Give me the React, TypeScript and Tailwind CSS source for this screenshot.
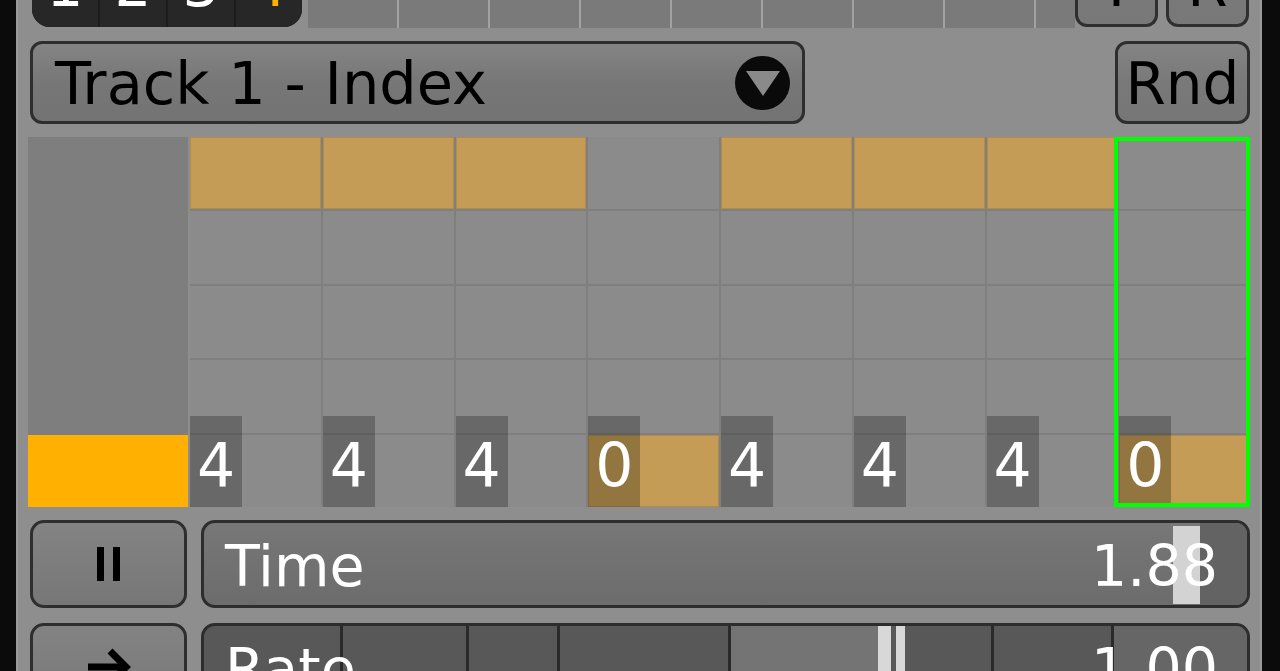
import React from "react";

const TOP = [true, true, true, false, true, true, true, false];
const BOTTOM = [false, false, false, true, false, false, false, true];
const VALUES = ["4", "4", "4", "0", "4", "4", "4", "0"];

function Column({ top, bottom, value, selected }: { top: boolean; bottom: boolean; value: string; selected: boolean }) {
  return (
    <div className="relative flex flex-col gap-[2px]">
      {[0, 1, 2, 3, 4].map((r) => {
        const orange = (r === 0 && top) || (r === 4 && bottom);
        return (
          <div
            key={r}
            className={orange ? "flex-1 bg-[#c59c55] shadow-[inset_0_0_0_1px_#b38c4a]" : "flex-1 bg-[#8b8b8b]"}
          />
        );
      })}
      <div className="absolute left-0 bottom-0 w-[52px] h-[91px] bg-black/25 flex justify-center items-end pb-[12px]">
        <span className="text-[60px] leading-none text-white">{value}</span>
      </div>
      {selected && <div className="absolute top-0 bottom-0 -left-[5px] right-0 border-4 border-[#00ff00]" />}
    </div>
  );
}

export default function App() {
  return (
    <div className="h-[671px] w-[1280px] overflow-hidden bg-[#0b0b0b] flex font-['DejaVu_Sans',sans-serif]">
      <div className="w-[16px] shrink-0 bg-[#0b0b0b]" />
      <div className="w-[1246px] shrink-0 h-full bg-[#8e8e8e] border-l-2 border-r-2 border-[#9b9b9b] px-[10px]">
        <div className="-mt-[56px] flex flex-col">
          {/* top row */}
          <div className="h-[83px] flex items-start">
            <div className="ml-[4px] w-[270px] h-[83px] flex gap-[2px] bg-[#1c1c1c] rounded-b-[18px] overflow-hidden">
              {["1", "2", "3", "4"].map((t, i) => (
                <div key={t} className="flex-1 bg-[#272727] flex justify-center pt-[13px]">
                  <span className={i === 3 ? "text-[58px] leading-none text-[#ffb000]" : "text-[58px] leading-none text-white"}>{t}</span>
                </div>
              ))}
            </div>
            <div className="ml-[6px] w-[767px] h-[84px] flex gap-[2px] bg-[#a2a2a2] overflow-hidden">
              {[0, 1, 2, 3, 4, 5, 6, 7, 8].map((i) => (
                <div key={i} className="w-[89px] shrink-0 h-full bg-[#7a7a7a]" />
              ))}
            </div>
            <div className="w-[83px] h-[83px] rounded-b-[12px] border-[3px] border-t-0 border-[#2f2f2f] bg-linear-to-b from-[#7c7c7c] to-[#787878] flex justify-center pt-[13px]">
              <span className="text-[58px] leading-none text-black">T</span>
            </div>
            <div className="ml-[8px] w-[83px] h-[83px] rounded-b-[12px] border-[3px] border-t-0 border-[#2f2f2f] bg-linear-to-b from-[#7c7c7c] to-[#787878] flex justify-center pt-[13px]">
              <span className="text-[58px] leading-none text-black">R</span>
            </div>
          </div>

          {/* dropdown row */}
          <div className="mt-[14px] h-[83px] flex items-stretch justify-between">
            <div className="ml-[2px] w-[775px] rounded-[12px] border-[3px] border-[#2e2e2e] bg-linear-to-b from-[#848484] via-[#777777] to-[#737373] flex items-center justify-between pl-[22px] pr-[12px]">
              <span className="text-[59px] leading-none text-black pt-[2px]">Track 1 - Index</span>
              <div className="w-[55px] h-[54px] rounded-full bg-[#0a0a0a] flex items-center justify-center">
                <svg width="38" height="30" viewBox="0 0 38 30">
                  <polygon points="2,3 36,3 19,28" fill="#8a8a8a" />
                </svg>
              </div>
            </div>
            <div className="w-[135px] rounded-[12px] border-[3px] border-[#2e2e2e] bg-linear-to-b from-[#848484] via-[#797979] to-[#767676] flex items-center justify-center">
              <span className="text-[58px] leading-none text-black pt-[2px]">Rnd</span>
            </div>
          </div>

          {/* grid */}
          <div className="mt-[13px] h-[370px] flex gap-[2px]">
            <div className="w-[160px] flex flex-col">
              <div className="flex-1 bg-[#7e7e7e]" />
              <div className="h-[72px] bg-[#ffb000]" />
            </div>
            <div className="w-[1060px] grid grid-cols-8 gap-[2px] bg-[#7f7f7f]">
              {TOP.map((t, i) => (
                <Column key={i} top={t} bottom={BOTTOM[i]} value={VALUES[i]} selected={i === 7} />
              ))}
            </div>
          </div>

          {/* time row */}
          <div className="mt-[13px] h-[88px] flex pl-[2px]">
            <div className="w-[157px] rounded-[14px] border-[3px] border-[#2e2e2e] bg-linear-to-b from-[#838383] to-[#777777] flex items-center justify-center gap-[9px]">
              <div className="w-[7px] h-[34px] bg-black" />
              <div className="w-[7px] h-[34px] bg-black" />
            </div>
            <div className="relative ml-[14px] w-[1049px] rounded-[14px] border-[3px] border-[#2d2d2d] bg-linear-to-b from-[#777777] to-[#6c6c6c] overflow-hidden flex items-center justify-between pl-[21px] pr-[29px]">
              <div className="absolute top-0 bottom-0 right-0 w-[47px] bg-[#636363]" />
              <div className="absolute top-[3px] bottom-[1px] right-[47px] w-[27px] bg-[#d3d3d3]" />
              <span className="relative text-[57px] leading-none text-white pt-[4px]">Time</span>
              <span className="relative text-[57px] leading-none text-white pt-[4px]">1.88</span>
            </div>
          </div>

          {/* rate row */}
          <div className="mt-[15px] h-[88px] flex pl-[2px]">
            <div className="w-[157px] rounded-[14px] border-[3px] border-[#2e2e2e] bg-linear-to-b from-[#838383] to-[#777777] flex items-center justify-center">
              <svg width="46" height="40" viewBox="0 0 46 40">
                <path d="M2 20 H40 M24 4 L40 20 L24 36" stroke="#000" strokeWidth="7" fill="none" />
              </svg>
            </div>
            <div className="relative ml-[14px] w-[1049px] rounded-[14px] border-[3px] border-[#2d2d2d] bg-[#585858] overflow-hidden flex items-center justify-between pl-[21px] pr-[29px]">
              <div className="absolute top-0 bottom-0 left-[527px] w-[147px] bg-[#747474]" />
              <div className="absolute top-0 bottom-0 left-[674px] w-[13px] bg-[#d8d8d8]" />
              <div className="absolute top-0 bottom-0 left-[692px] w-[9px] bg-[#d8d8d8]" />
              <div className="absolute top-0 bottom-0 left-[910px] right-0 bg-[#666666]" />
              <div className="absolute top-0 bottom-0 left-[136px] w-[3px] bg-[#2a2a2a]" />
              <div className="absolute top-0 bottom-0 left-[262px] w-[3px] bg-[#2a2a2a]" />
              <div className="absolute top-0 bottom-0 left-[353px] w-[3px] bg-[#2a2a2a]" />
              <div className="absolute top-0 bottom-0 left-[524px] w-[3px] bg-[#2a2a2a]" />
              <div className="absolute top-0 bottom-0 left-[787px] w-[3px] bg-[#2a2a2a]" />
              <div className="absolute top-0 bottom-0 left-[907px] w-[3px] bg-[#2a2a2a]" />
              <span className="relative text-[57px] leading-none text-white pt-[4px]">Rate</span>
              <span className="relative text-[57px] leading-none text-white pt-[4px]">1.00</span>
            </div>
          </div>
        </div>
      </div>
      <div className="flex-1 bg-[#0b0b0b]" />
    </div>
  );
}
